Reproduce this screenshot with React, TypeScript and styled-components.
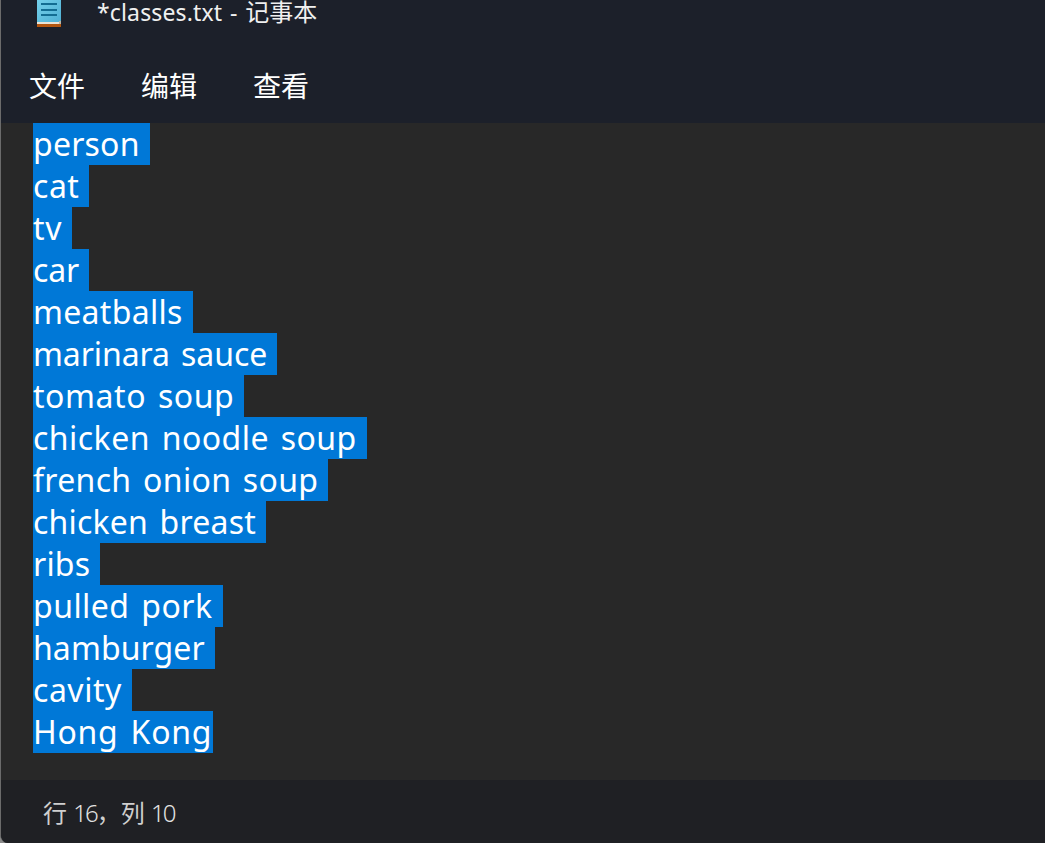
import styled, { createGlobalStyle } from "styled-components";

// tracking nudges each line so the selection ends where it does in Segoe UI
const LINES: [string, number][] = [
  ["person", 0.2],
  ["cat", 0.53],
  ["tv", 0.7],
  ["car", -0.13],
  ["meatballs", 0.31],
  ["marinara sauce", -0.09],
  ["tomato soup", 0.56],
  ["chicken noodle soup", 0.46],
  ["french onion soup", 0.32],
  ["chicken breast", 0.2],
  ["ribs", 0.2],
  ["pulled pork", 0.47],
  ["hamburger", 0.09],
  ["cavity", 0.53],
  ["Hong Kong", 0.75],
];

const MENUS = ["文件", "编辑", "查看"];

function NotepadIcon(): JSX.Element {
  return (
    <svg width="24" height="27" viewBox="0 0 24 27">
      <defs>
        <linearGradient id="page" x1="0" y1="0" x2="1" y2="1">
          <stop offset="0" stopColor="#74d0ea" />
          <stop offset="1" stopColor="#4fb0d4" />
        </linearGradient>
      </defs>
      <rect x="0" y="0" width="24" height="22" fill="url(#page)" />
      <rect x="0" y="22" width="24" height="2" fill="#e9e3d6" />
      <rect x="22" y="21" width="2" height="3" fill="#b9b3a6" />
      <rect x="0" y="24" width="24" height="3" fill="#b4560f" />
      <rect x="4" y="3" width="16" height="2" fill="#136d92" />
      <rect x="4" y="9" width="16" height="2" fill="#136d92" />
      <rect x="4" y="14" width="16" height="2" fill="#136d92" />
    </svg>
  );
}

export default function App(): JSX.Element {
  return (
    <>
      <GlobalStyle />
      <Window>
        <TitleBar>
          <IconSlot>
            <NotepadIcon />
          </IconSlot>
          <Title>
            *classes.txt - <TitleApp>记事本</TitleApp>
          </Title>
        </TitleBar>

        <MenuBar>
          {MENUS.map((menu) => (
            <MenuItem key={menu}>{menu}</MenuItem>
          ))}
        </MenuBar>

        <Editor>
          {LINES.map(([line, tracking], index) => (
            <Line key={line} $tracking={tracking} $last={index === LINES.length - 1}>
              {line}
            </Line>
          ))}
        </Editor>

        <StatusBar>
          <Position>
            行 <Digits>16</Digits>，列 <Digits>10</Digits>
          </Position>
        </StatusBar>
      </Window>
    </>
  );
}

const GlobalStyle = createGlobalStyle`
  html, body {
    margin: 0;
    height: 100%;
    background: #8a8a8a;
  }

  #root {
    height: 100%;
  }
`;

const Window = styled.div`
  box-sizing: border-box;
  display: flex;
  flex-direction: column;
  width: 1045px;
  height: 843px;
  overflow: hidden;
  border-left: 1px solid #6b6b6b;
  border-bottom-left-radius: 8px;
  background: #1e2028;
  font-family: "Noto Sans", "Noto Sans CJK SC", sans-serif;
  color: #fff;
`;

const TitleBar = styled.div`
  display: flex;
  flex-shrink: 0;
  height: 42px;
  background: #1c202a;
`;

const IconSlot = styled.div`
  width: 24px;
  height: 27px;
  margin-left: 36px;
`;

const Title = styled.div`
  margin: -5px 0 0 36px;
  font-size: 23px;
  line-height: 34px;
  letter-spacing: 0.15px;
  word-spacing: 1.5px;
  white-space: nowrap;
  color: #f0f0f0;
`;

const TitleApp = styled.span`
  font-size: 24px;
  letter-spacing: 0;
`;

const MenuBar = styled.div`
  display: flex;
  flex-shrink: 0;
  gap: 56px;
  height: 81px;
  padding: 24px 0 0 28px;
  box-sizing: border-box;
  background: #1c202a;
`;

const MenuItem = styled.div`
  font-size: 28px;
  line-height: 40px;
  color: #fff;
`;

const Editor = styled.div`
  flex: 1;
  display: flex;
  flex-direction: column;
  align-items: flex-start;
  padding-left: 32px;
  background: #282828;
`;

const Line = styled.div<{ $tracking: number; $last: boolean }>`
  height: 42px;
  padding-right: ${({ $last }) => ($last ? "1px" : "10px")};
  background: #0078d7;
  font-size: 32px;
  line-height: 42px;
  letter-spacing: ${({ $tracking }) => $tracking}px;
  word-spacing: 3px;
  white-space: nowrap;
`;

const StatusBar = styled.div`
  display: flex;
  align-items: center;
  flex-shrink: 0;
  height: 63px;
  padding-left: 42px;
  background: #1f2024;
`;

const Position = styled.div`
  font-size: 24px;
  color: #cfcfcf;
`;

const Digits = styled.span`
  font-size: 24px;
  font-weight: 300;
  letter-spacing: -2px;
  color: #e2e2e2;
`;
